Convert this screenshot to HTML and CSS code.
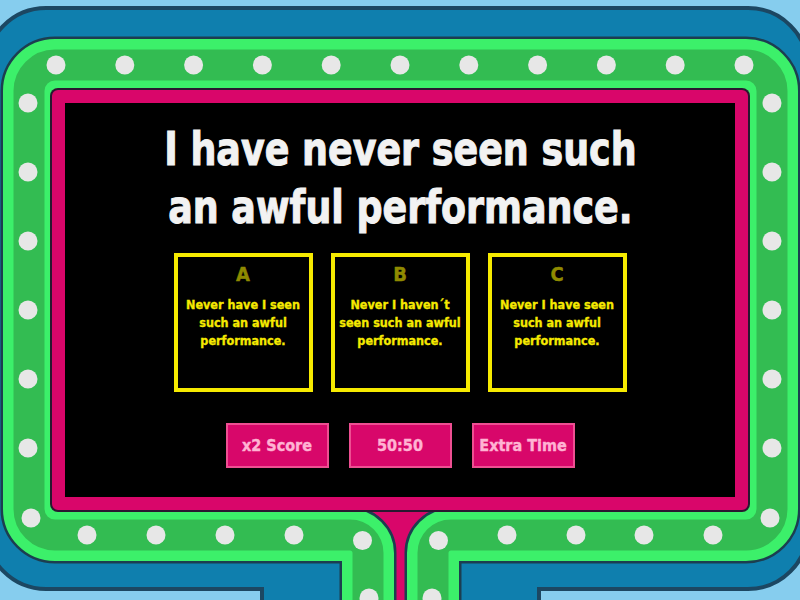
FILE: index.html
```html
<!DOCTYPE html>
<html lang="en">
<head>
<meta charset="utf-8">
<title>Gameshow quiz</title>
<link rel="stylesheet" href="styles.css">
</head>
<body>
<div class="stage">
  <svg class="art" width="800" height="600" viewBox="0 0 800 600" aria-hidden="true">
    <path class="blue" d="M -14 68 A 60 60 0 0 1 46 8 H 748 A 60 60 0 0 1 808 68 V 529 A 60 60 0 0 1 748 589 H 539 V 620 H 262 V 589 H 46 A 60 60 0 0 1 -14 529 Z"/>
    <rect class="stem" x="360" y="490" width="80" height="130"/>
    <path class="band band-outline" d="M 368 620 V 553 A 18 18 0 0 0 350 535 H 55 A 26 26 0 0 1 29 509 V 91 A 26 26 0 0 1 55 65 H 746 A 26 26 0 0 1 772 91 V 509 A 26 26 0 0 1 746 535 H 451 A 18 18 0 0 0 433 553 V 620"/>
    <path class="band band-light" d="M 368 620 V 553 A 18 18 0 0 0 350 535 H 55 A 26 26 0 0 1 29 509 V 91 A 26 26 0 0 1 55 65 H 746 A 26 26 0 0 1 772 91 V 509 A 26 26 0 0 1 746 535 H 451 A 18 18 0 0 0 433 553 V 620"/>
    <path class="band band-dark" d="M 368 620 V 553 A 18 18 0 0 0 350 535 H 55 A 26 26 0 0 1 29 509 V 91 A 26 26 0 0 1 55 65 H 746 A 26 26 0 0 1 772 91 V 509 A 26 26 0 0 1 746 535 H 451 A 18 18 0 0 0 433 553 V 620"/>
    <g class="dots">
      <circle cx="56" cy="65" r="9.5"/><circle cx="124.8" cy="65" r="9.5"/><circle cx="193.6" cy="65" r="9.5"/><circle cx="262.4" cy="65" r="9.5"/><circle cx="331.2" cy="65" r="9.5"/><circle cx="400" cy="65" r="9.5"/><circle cx="468.8" cy="65" r="9.5"/><circle cx="537.6" cy="65" r="9.5"/><circle cx="606.4" cy="65" r="9.5"/><circle cx="675.2" cy="65" r="9.5"/><circle cx="744" cy="65" r="9.5"/>
      <circle cx="28" cy="103" r="9.5"/><circle cx="28" cy="172" r="9.5"/><circle cx="28" cy="241" r="9.5"/><circle cx="28" cy="310" r="9.5"/><circle cx="28" cy="379" r="9.5"/><circle cx="28" cy="448" r="9.5"/><circle cx="31" cy="518" r="9.5"/>
      <circle cx="772" cy="103" r="9.5"/><circle cx="772" cy="172" r="9.5"/><circle cx="772" cy="241" r="9.5"/><circle cx="772" cy="310" r="9.5"/><circle cx="772" cy="379" r="9.5"/><circle cx="772" cy="448" r="9.5"/><circle cx="770" cy="518" r="9.5"/>
      <circle cx="87" cy="535" r="9.5"/><circle cx="156" cy="535" r="9.5"/><circle cx="225" cy="535" r="9.5"/><circle cx="294" cy="535" r="9.5"/><circle cx="362.5" cy="540.5" r="9.5"/><circle cx="369" cy="598" r="9.5"/>
      <circle cx="507" cy="535" r="9.5"/><circle cx="576" cy="535" r="9.5"/><circle cx="644" cy="535" r="9.5"/><circle cx="713" cy="535" r="9.5"/><circle cx="438.5" cy="540.5" r="9.5"/><circle cx="432" cy="598" r="9.5"/>
    </g>
  </svg>

  <div class="frame">
    <div class="screen">
      <h1 class="question">I have never seen such<br>an awful performance.</h1>
      <div class="options">
        <div class="option">
          <div class="letter">A</div>
          <p class="answer">Never have I seen such an awful performance.</p>
        </div>
        <div class="option">
          <div class="letter">B</div>
          <p class="answer">Never I haven´t seen such an awful performance.</p>
        </div>
        <div class="option">
          <div class="letter">C</div>
          <p class="answer">Never I have seen such an awful performance.</p>
        </div>
      </div>
      <div class="powerups">
        <div class="powerup">x2 Score</div>
        <div class="powerup">50:50</div>
        <div class="powerup">Extra Time</div>
      </div>
    </div>
  </div>
</div>
</body>
</html>
```

FILE: styles.css
```css
html, body {
  margin: 0;
  padding: 0;
}

body {
  background: #86cdee;
  font-family: "DejaVu Sans Condensed", "DejaVu Sans", sans-serif;
  font-stretch: condensed;
  font-weight: bold;
}

.stage {
  width: 800px;
  height: 600px;
  display: grid;
  overflow: hidden;
  background: #86cdee;
}

.art,
.frame {
  grid-area: 1 / 1;
}

.art {
  display: block;
}

.blue {
  fill: #0f7fae;
  stroke: #1c4762;
  stroke-width: 4;
}

.stem {
  fill: #d9066a;
}

.band {
  fill: none;
  stroke-linejoin: round;
}

.band-outline {
  stroke: #1c3e50;
  stroke-width: 57;
}

.band-light {
  stroke: #3cf06a;
  stroke-width: 52;
}

.band-dark {
  stroke: #33bc52;
  stroke-width: 31;
}

.dots circle {
  fill: #e7e7e7;
}

.frame {
  align-self: start;
  justify-self: start;
  margin: 90px 0 0 52px;
  width: 670px;
  height: 394px;
  border: 13px solid #d9066a;
  border-radius: 6px;
  box-shadow: 0 0 0 2px #2a1830;
  background: #000;
}

.screen {
  height: 100%;
  display: flex;
  flex-direction: column;
  align-items: center;
  padding-top: 17px;
  box-sizing: border-box;
}

.question {
  margin: 0;
  font-size: 46px;
  line-height: 58px;
  font-weight: bold;
  color: #f2f2f2;
  -webkit-text-stroke: 1px #f2f2f2;
  text-align: center;
  white-space: nowrap;
  transform: scaleX(0.88);
}

.options {
  display: flex;
  gap: 18px;
  margin-top: 17px;
}

.option {
  width: 131px;
  height: 131px;
  border: 4px solid #f6ea00;
  display: flex;
  flex-direction: column;
  align-items: center;
}

.letter {
  margin-top: 6px;
  font-size: 20px;
  line-height: 22px;
  color: #8f8a00;
  -webkit-text-stroke: 0.4px #8f8a00;
}

.answer {
  margin: 11px 0 0;
  padding: 0;
  font-size: 12.5px;
  line-height: 18px;
  color: #f6ea00;
  -webkit-text-stroke: 0.3px #f6ea00;
  text-align: center;
}

.powerups {
  display: flex;
  gap: 20px;
  margin-top: 31px;
}

.powerup {
  width: 99px;
  height: 41px;
  border: 2px solid #ee4f92;
  background: #d8076a;
  color: #ffb3d3;
  -webkit-text-stroke: 0.4px #ffb3d3;
  font-size: 16px;
  display: flex;
  align-items: center;
  justify-content: center;
}
```
